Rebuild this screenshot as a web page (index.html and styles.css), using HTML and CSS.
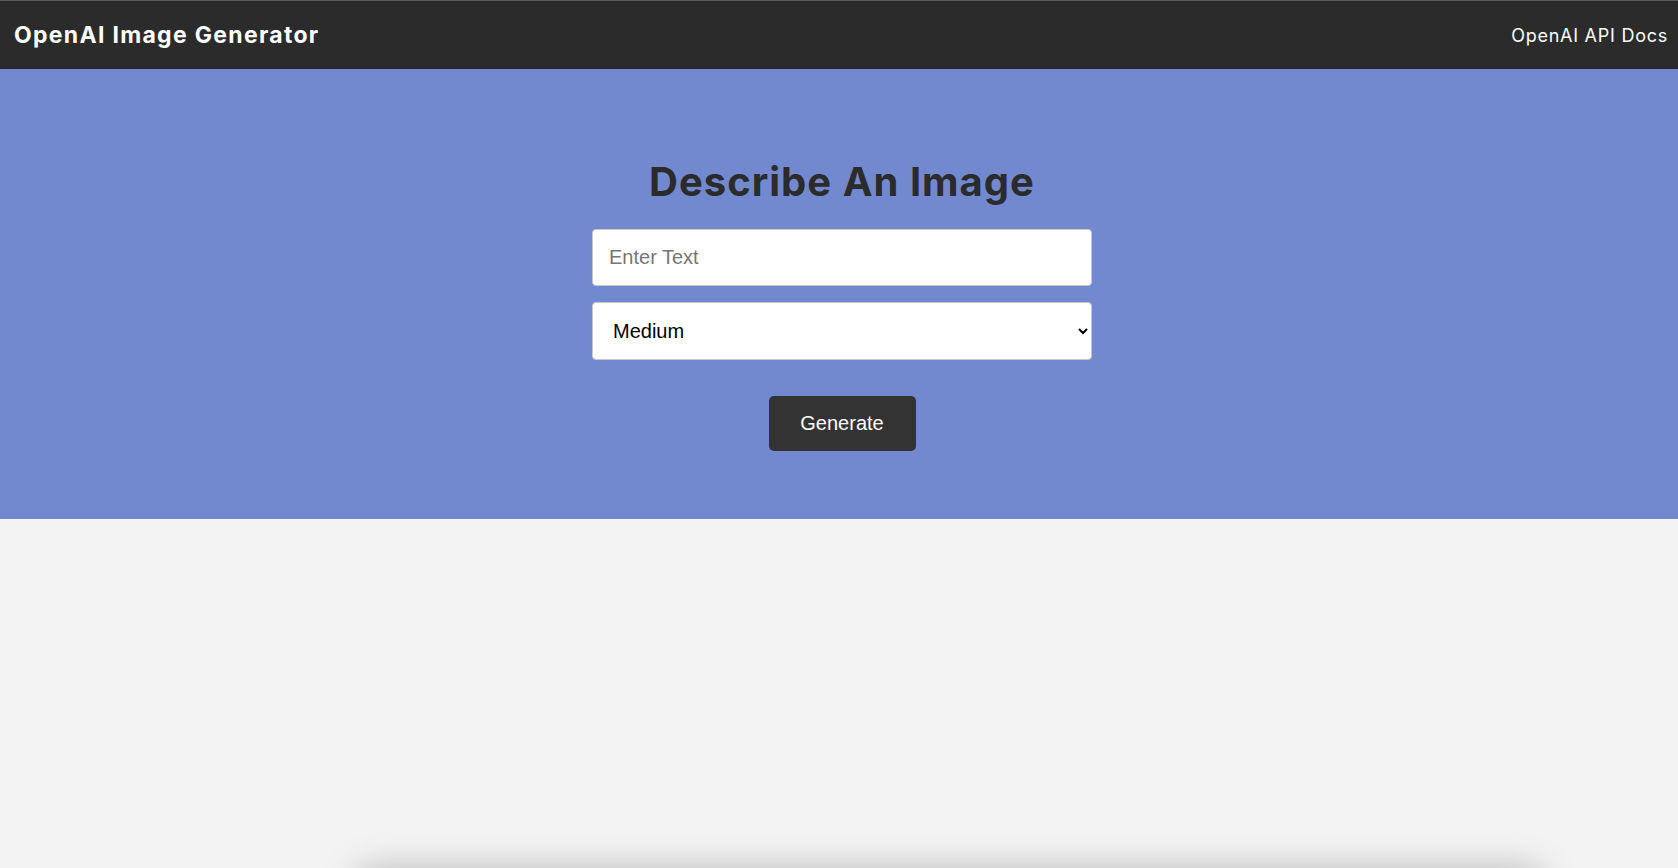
FILE: index.html
```html
<!DOCTYPE html>
<html lang="en">
<head>
<meta charset="UTF-8">
<title>OpenAI Image Generator</title>
<link rel="stylesheet" href="styles.css">
</head>
<body>
<header class="navbar">
  <div class="logo">OpenAI Image Generator</div>
  <a class="nav-link" href="#">OpenAI API Docs</a>
</header>
<main>
  <section class="showcase">
    <form class="prompt-form">
      <h1 class="title">Describe An Image</h1>
      <input class="field text-field" type="text" placeholder="Enter Text">
      <select class="field size-field">
        <option>Small</option>
        <option selected>Medium</option>
        <option>Large</option>
      </select>
      <button class="btn" type="button">Generate</button>
    </form>
  </section>
  <section class="image-section">
    <div class="image-container"></div>
  </section>
</main>
</body>
</html>
```
FILE: styles.css
```css
* { box-sizing: border-box; }
body {
  margin: 0;
  background: #f3f3f3;
  font-family: "Liberation Sans", Arial, sans-serif;
}
.navbar {
  height: 69px;
  border-top: 1px solid #5a5a5a;
  background: #2b2b2b;
  display: flex;
  align-items: center;
  justify-content: space-between;
  padding: 0 10px 0 14px;
  font-family: Inter, "DejaVu Sans", sans-serif;
}
.logo {
  color: #fff;
  font-weight: 700;
  font-size: 23px;
  letter-spacing: 1.3px;
}
.nav-link {
  color: #fff;
  text-decoration: none;
  font-size: 18px;
  font-weight: 400;
  letter-spacing: 0.75px;
}
.showcase {
  background: #7289cf;
  padding: 89px 0 68px 6px;
}
.prompt-form {
  width: 500px;
  margin: 0 auto;
  display: flex;
  flex-direction: column;
  align-items: center;
}
.title {
  margin: 0 0 23px;
  font-family: Inter, "DejaVu Sans", sans-serif;
  font-weight: 700;
  font-size: 40px;
  line-height: 48px;
  letter-spacing: 1px;
  color: #2b2b2b;
}
.field {
  width: 100%;
  border: 1px solid #c8c8c8;
  border-radius: 4px;
  background: #fff;
  font-family: "Liberation Sans", Arial, sans-serif;
  font-size: 20px;
  color: #000;
}
.text-field {
  height: 57px;
  padding: 0 16px;
  margin-bottom: 16px;
}
.text-field::placeholder { color: #757575; }
.size-field {
  height: 58px;
  padding: 0 16px;
  margin-bottom: 36px;
}
.btn {
  width: 147px;
  height: 55px;
  border: none;
  border-radius: 5px;
  background: #333;
  color: #fff;
  font-family: "Liberation Sans", Arial, sans-serif;
  font-size: 20px;
}
.image-section {
  padding-top: 352px;
}
.image-container {
  width: 1180px;
  height: 300px;
  margin-left: 360px;
  box-shadow: 0 0 34px rgba(0, 0, 0, 0.28);
}
```
